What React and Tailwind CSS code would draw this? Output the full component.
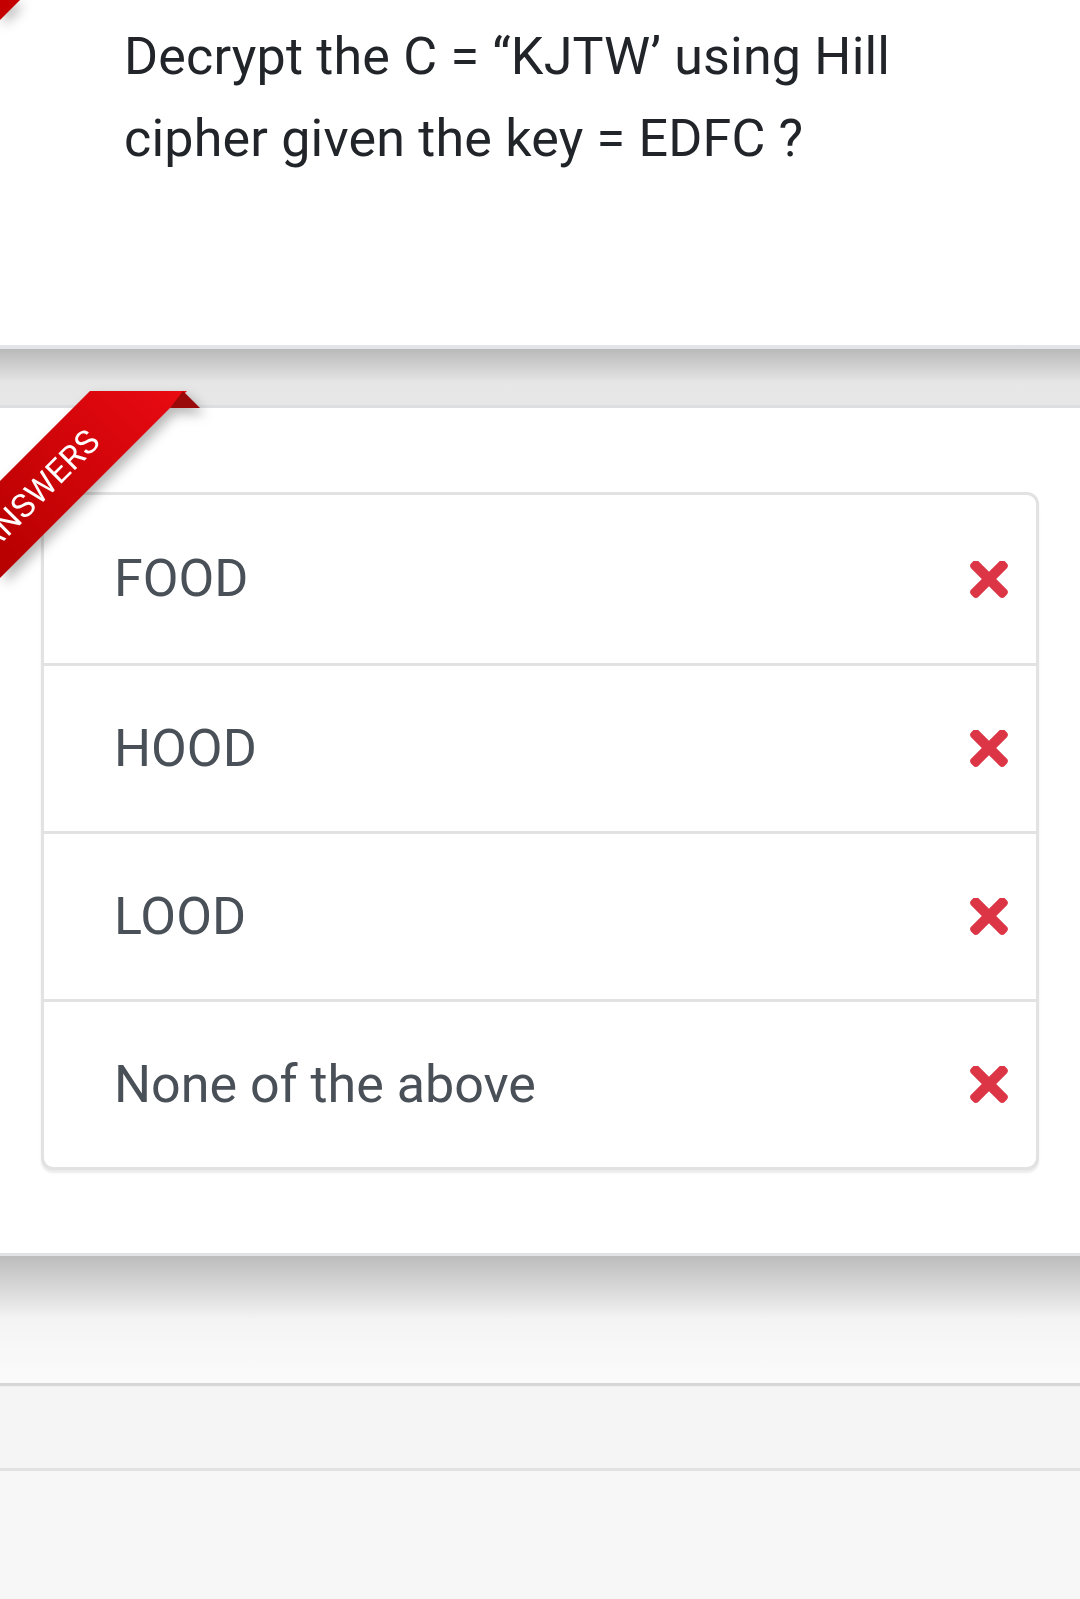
const answers = ["FOOD", "HOOD", "LOOD", "None of the above"];

function TimesIcon() {
  return (
    <svg viewBox="0 89 352 344" className="h-[37px] w-[38px]" aria-hidden="true">
      <path
        fill="#dc3545"
        d="M242.72 256l100.07-100.07c12.28-12.28 12.28-32.19 0-44.48l-22.24-22.24c-12.28-12.28-32.19-12.28-44.48 0L176 189.28 75.93 89.21c-12.28-12.28-32.19-12.28-44.48 0L9.21 111.45c-12.28 12.28-12.28 32.19 0 44.48L109.28 256 9.21 356.07c-12.28 12.28-12.28 32.19 0 44.48l22.24 22.24c12.28 12.28 32.2 12.28 44.48 0L176 322.72l100.07 100.07c12.28 12.28 32.2 12.28 44.48 0l22.24-22.24c12.28-12.28 12.28-32.19 0-44.48L242.72 256z"
      />
    </svg>
  );
}

function Ribbon() {
  return (
    <svg
      width="210"
      height="200"
      viewBox="0 0 210 200"
      className="absolute left-0 top-[-17px] drop-shadow-[5px_6px_6px_rgba(0,0,0,0.28)]"
    >
      <defs>
        <linearGradient id="ribbon-red" x1="1" y1="0" x2="0" y2="1">
          <stop offset="0%" stopColor="#ea0a12" />
          <stop offset="100%" stopColor="#b50000" />
        </linearGradient>
      </defs>
      <polygon points="90,0 187,0 0,187 0,90" fill="url(#ribbon-red)" />
      <polygon points="183,0 200,17 170,17" fill="#9a0a0a" />
      <text
        x="102"
        y="52"
        textAnchor="end"
        transform="rotate(-45 102 52)"
        fill="#ffffff"
        fontSize="33"
        fontFamily="Roboto, sans-serif"
        letterSpacing="0.5"
      >
        ANSWERS
      </text>
    </svg>
  );
}

export default function App() {
  return (
    <div className="min-h-[1599px] bg-[#f7f7f7] font-['Roboto',sans-serif]">
      <section className="relative h-[345px] overflow-hidden bg-white">
        <svg
          width="40"
          height="40"
          className="absolute left-0 top-0 drop-shadow-[4px_5px_6px_rgba(0,0,0,0.3)]"
        >
          <polygon points="0,0 20,0 0,20" fill="#c40000" />
        </svg>
        <h1 className="pl-[124px] pr-[60px] pt-[16px] text-[52px] font-normal leading-[82px] text-[#212529] tracking-[0.2px]">
          Decrypt the C = “KJTW’ using Hill
          <br />
          cipher given the key = EDFC ?
        </h1>
      </section>

      <div className="h-[4px] bg-[#e2e4e7]" />
      <div className="h-[56px] bg-gradient-to-b from-[#b9b9b9] via-[#e6e6e6] via-60% to-[#e7e7e7]" />
      <div className="h-[3px] bg-[#dcdfe0]" />

      <section className="relative h-[845px] bg-white px-[41px] pt-[84px]">
        <Ribbon />
        <ul className="rounded-[12px] border-[3px] border-[#e2e2e2] bg-white shadow-[0_3px_2px_rgba(0,0,0,0.08)]">
          {answers.map((answer, index) => (
            <li
              key={answer}
              className={`flex h-[168px] items-center justify-between pl-[70px] pr-[28px] ${
                index > 0 ? "border-t-[3px] border-[#e2e2e2]" : ""
              }`}
            >
              <span className="text-[52px] leading-none text-[#495057]">{answer}</span>
              <TimesIcon />
            </li>
          ))}
        </ul>
      </section>

      <div className="h-[3px] bg-[#e0e3e6]" />
      <div className="h-[127px] bg-gradient-to-b from-[#bcbcbc] via-[#f4f4f4] via-50% to-[#fbfbfb]" />
      <div className="h-[3px] bg-[#d7d7d7]" />
      <div className="h-[82px] border-t border-[#efefef] bg-[#f5f5f5]" />
      <div className="h-[3px] bg-[#e2e2e2]" />
    </div>
  );
}
